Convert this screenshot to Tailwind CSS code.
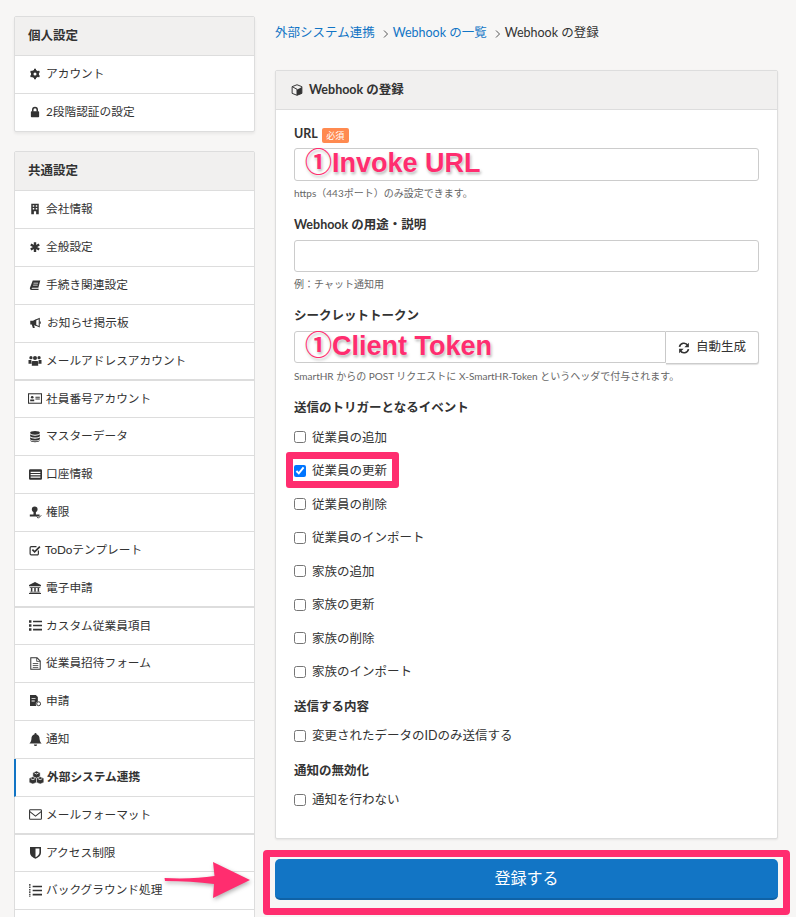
<!DOCTYPE html>
<html lang="ja">
<head>
  <meta charset="UTF-8" />
  <meta name="viewport" content="width=device-width, initial-scale=1.0" />
  <title>Webhook の登録</title>
  <script src="https://cdn.jsdelivr.net/npm/@tailwindcss/browser@4"></script>
</head>
<body class="bg-[#f7f6f5] h-[917px] overflow-hidden font-[Lato,'Noto_Sans_CJK_JP',sans-serif] text-[#333]">
  <div class="relative flex items-start gap-[20px] pl-[14px] pt-[16px]">

    <!-- sidebar -->
    <aside class="w-[241px] shrink-0 text-[11.7px]">
      <section class="bg-white border border-[#ddd] rounded-[2px] shadow-[0_2px_3px_rgba(0,0,0,0.06)] mb-[19px]">
        <h2 class="h-[39px] flex items-center pl-[13px] bg-[#f1f0ef] border-b border-[#ddd] text-[12.5px] font-bold">個人設定</h2>
        <a class="h-[38px] pb-px flex items-center gap-[5px] pl-[14px] border-b border-[#ddd]">
          <svg class="w-[12px] h-[12px] fill-none stroke-[#333]" viewBox="0 0 16 16"><circle cx="8" cy="8" r="3.7" stroke-width="3.4"/><path d="M8 1v14M2 4.5l12 7M14 4.5l-12 7" stroke-width="2.6" stroke-dasharray="3 8 3"/></svg>
          アカウント</a>
        <a class="h-[37px] pb-px flex items-center gap-[5px] pl-[14px]">
          <svg class="w-[12px] h-[12px]" viewBox="0 0 16 16"><path d="M5 7.5V5a3 3 0 0 1 6 0v2.5" fill="none" stroke="#333" stroke-width="2"/><rect x="2.5" y="7" width="11" height="8" rx="1" fill="#333"/></svg>
          2段階認証の設定</a>
      </section>

      <section class="bg-white border border-[#ddd] rounded-[2px]">
        <h2 class="h-[39px] flex items-center pl-[13px] bg-[#f1f0ef] border-b border-[#ddd] text-[12.5px] font-bold">共通設定</h2>
        <a class="h-[38px] pb-px flex items-center gap-[5px] pl-[14px] border-b border-[#ddd]">
          <svg class="w-[12px] h-[12px]" viewBox="0 0 16 16"><path fill="#333" fill-rule="evenodd" d="M3 1h10v14H3zM5 3v2h2V3zm4 0v2h2V3zM5 6.500v2h2v-2zm4 0v2h2v-2zM6.500 11v4h3v-4z"/></svg>
          会社情報</a>
        <a class="h-[38px] pb-px flex items-center gap-[5px] pl-[14px] border-b border-[#ddd]">
          <svg class="w-[12px] h-[12px]" viewBox="0 0 16 16"><path d="M8 1.500v13M2.400 4.750l11.200 6.500M13.600 4.750l-11.200 6.500" stroke="#333" stroke-width="3.200"/></svg>
          全般設定</a>
        <a class="h-[38px] pb-px flex items-center gap-[5px] pl-[14px] border-b border-[#ddd]">
          <svg class="w-[12px] h-[12px]" viewBox="0 0 16 16"><path fill="#333" fill-rule="evenodd" d="M5 2h10l-2.500 9.500H4.500c-1 0-1.300 1.500 0 1.500H13l-.5 1.500H3.500C1.500 14.500.800 13 1.300 11.500zM6 5v1h6V5zM5.500 7.500v1h6v-1z"/></svg>
          手続き関連設定</a>
        <a class="h-[38px] pb-px flex items-center gap-[5px] pl-[14px] border-b border-[#ddd]">
          <svg class="w-[13px] h-[12px]" viewBox="0 0 16 16"><path fill="#333" d="M1 5h5v5H1zM3 10h3l1 4.500H4.500z"/><path d="M6 5l7-3v11L6 10z" fill="#fff" stroke="#333" stroke-width="1.400"/><path fill="#333" d="M6 4.500l3-1.300v8.600L6 10.500z"/><path d="M13.500 6h1.500v3h-1.500" fill="#333"/></svg>
          お知らせ掲示板</a>
        <a class="h-[38px] pb-px flex items-center gap-[4px] pl-[13px] border-b-2 border-[#ddd]">
          <svg class="w-[14px] h-[13px]" viewBox="0 0 16 16"><g fill="#333"><circle cx="3" cy="4.500" r="2"/><circle cx="13" cy="4.500" r="2"/><circle cx="8" cy="5" r="2.500"/><path d="M0 7.500h3.500L4 12H0zM16 7.500h-3.500L12 12h4zM4.500 8.500h7l.5 6H4z"/></g></svg>
          メールアドレスアカウント</a>

        <a class="h-[37px] pb-px flex items-center gap-[4px] pl-[13px] border-b border-[#ddd]">
          <svg class="w-[14px] h-[11px]" viewBox="0 0 16 12"><rect x=".6" y=".6" width="14.800" height="10.800" fill="none" stroke="#333" stroke-width="1.200"/><circle cx="4.800" cy="4.600" r="1.500" fill="#333"/><path fill="#333" d="M2.500 7h4.600v2H2.500zM8.500 4h5v1h-5zM8.500 6h5v1h-5z"/></svg>
          社員番号アカウント</a>
        <a class="h-[38px] pb-px flex items-center gap-[5px] pl-[14px] border-b border-[#ddd]">
          <svg class="w-[12px] h-[13px]" viewBox="0 0 16 16"><g fill="#333"><ellipse cx="8" cy="3" rx="6.500" ry="2.500"/><path d="M1.500 5c1 2.500 12 2.500 13 0v2.500c-1 2.500-12 2.500-13 0zM1.500 9c1 2.500 12 2.500 13 0v2.500c-1 2.500-12 2.500-13 0z"/><path d="M1.500 12.500c1 2.500 12 2.500 13 0V13c0 3.500-13 3.500-13 0z"/></g></svg>
          マスターデータ</a>
        <a class="h-[38px] pb-px flex items-center gap-[4px] pl-[14px] border-b border-[#ddd]">
          <svg class="w-[13px] h-[11px]" viewBox="0 0 16 13"><path fill="#333" fill-rule="evenodd" d="M1.500 0h13A1.500 1.500 0 0 1 16 1.500v10a1.500 1.500 0 0 1-1.500 1.500h-13A1.500 1.500 0 0 1 0 11.500v-10A1.500 1.500 0 0 1 1.500 0zM2 3v1.500h12V3zM2 6v1.500h12V6zM2 9v1.500h12V9z"/></svg>
          口座情報</a>
        <a class="h-[38px] pb-px flex items-center gap-[4px] pl-[14px] border-b border-[#ddd]">
          <svg class="w-[13px] h-[13px]" viewBox="0 0 16 16"><g fill="#333"><circle cx="7" cy="4" r="3.500"/><path d="M5.500 7h3v3.500h-3zM1 10.500h12V13H1z"/></g><path d="M9.500 13l2 2 3.500-3.500" fill="none" stroke="#333" stroke-width="1.200"/></svg>
          権限</a>
        <a class="h-[38px] pb-px flex items-center gap-[4px] pl-[14px] border-b border-[#ddd]">
          <svg class="w-[12px] h-[12px]" viewBox="0 0 16 16"><path d="M12.500 8.500V13a1.500 1.500 0 0 1-1.500 1.500H3A1.500 1.500 0 0 1 1.500 13V5A1.500 1.500 0 0 1 3 3.500h7" fill="none" stroke="#333" stroke-width="1.600"/><path d="M4.500 7.500l3 3 7-7" fill="none" stroke="#333" stroke-width="2.300"/></svg>
          ToDoテンプレート</a>
        <a class="h-[38px] pb-px flex items-center gap-[5px] pl-[14px] border-b-2 border-[#ddd]">
          <svg class="w-[12px] h-[12px]" viewBox="0 0 16 16"><path fill="#333" d="M8 0l8 4v1.500H0V4zM1 6.500h14v1H1zM2.500 8h2v4.500h-2zM7 8h2v4.500H7zM11.500 8h2v4.500h-2zM1 13h14v1H1zM0 14.500h16V16H0z"/></svg>
          電子申請</a>

        <a class="h-[37px] pb-px flex items-center gap-[4px] pl-[14px] border-b border-[#ddd]">
          <svg class="w-[13px] h-[11px]" viewBox="0 0 16 13"><path fill="#333" d="M0 0h3v3H0zM5 .5h11v2H5zM0 5h3v3H0zM5 5.500h11v2H5zM0 10h3v3H0zM5 10.500h11v2H5z"/></svg>
          カスタム従業員項目</a>
        <a class="h-[38px] pb-px flex items-center gap-[5px] pl-[15px] border-b border-[#ddd]">
          <svg class="w-[11px] h-[13px]" viewBox="0 0 14 16"><path d="M1 .8h8l4 4v10.400H1z" fill="none" stroke="#333" stroke-width="1.300"/><path d="M8.500 1v4.300H13M3.500 8h7M3.500 10.500h7M3.500 13h7" fill="none" stroke="#333"/></svg>
          従業員招待フォーム</a>
        <a class="h-[38px] pb-px flex items-center gap-[5px] pl-[15px] border-b border-[#ddd]">
          <svg class="w-[11px] h-[12px]" viewBox="0 0 14 15"><path fill="#333" fill-rule="evenodd" d="M0 0h7.500L10 2.500V8a4 4 0 0 0-2 5.500V14H0zM2 4v1h5V4zM2 7v1h4V7z"/><circle cx="11" cy="11" r="2.500" fill="none" stroke="#333" stroke-width="1.200"/></svg>
          申請</a>
        <a class="h-[38px] pb-px flex items-center gap-[4px] pl-[14px] border-b border-[#ddd]">
          <svg class="w-[13px] h-[13px]" viewBox="0 0 16 16"><path fill="#333" d="M8 0a1.200 1.200 0 0 1 1.200 1.400C12 2 13 4.500 13 7c0 3 1.500 4.500 2.500 6h-15C1.500 11.500 3 10 3 7c0-2.500 1-5 3.800-5.600A1.200 1.200 0 0 1 8 0zM6 14h4a2 2 0 0 1-4 0z"/></svg>
          通知</a>
        <a class="h-[38px] pb-px flex items-center gap-[3px] pl-[13px] border-b border-[#ddd] border-l-2 border-l-[#1275c5] -ml-px font-bold">
          <svg class="w-[15px] h-[13px]" viewBox="0 0 18 16"><g fill="#333" stroke="#fff" stroke-width=".6"><path d="M9 0l4.500 2v5L9 9 4.500 7V2z"/><path d="M4.500 7L9 9v5l-4.500 2L0 14V9z"/><path d="M13.500 7L18 9v5l-4.500 2L9 14V9z"/></g><path d="M6.500 2.500L9 3.700l2.500-1.200M2 9.500l2.500 1.200L7 9.500M11 9.500l2.500 1.200L16 9.500" fill="none" stroke="#fff" stroke-width="1"/></svg>
          外部システム連携</a>
        <a class="h-[38px] pb-px flex items-center gap-[4px] pl-[14px] border-b-2 border-[#ddd]">
          <svg class="w-[13px] h-[11px]" viewBox="0 0 16 13"><rect x=".7" y=".7" width="14.600" height="11.600" rx="1" fill="none" stroke="#333" stroke-width="1.300"/><path d="M1 3l7 5.500L15 3" fill="none" stroke="#333" stroke-width="1.300"/></svg>
          メールフォーマット</a>

        <a class="h-[37px] pb-px flex items-center gap-[5px] pl-[15px] border-b border-[#ddd]">
          <svg class="w-[11px] h-[13px]" viewBox="0 0 14 16"><path fill="#333" fill-rule="evenodd" d="M0 1h14v7c0 4-3.500 6.500-7 8-3.500-1.500-7-4-7-8zm7 1.800V14c2.500-1.200 5-3.200 5-6V2.800z"/></svg>
          アクセス制限</a>
        <a class="h-[38px] pb-px flex items-center gap-[4px] pl-[14px] border-b border-[#ddd]">
          <svg class="w-[13px] h-[13px]" viewBox="0 0 16 16"><path fill="#333" d="M4.500 2h11.500v2H4.500zM4.500 7h11.500v2H4.500zM4.500 12h11.500v2H4.500z"/><path d="M1 0v16" stroke="#333" stroke-width="1.600" stroke-dasharray="2 1"/></svg>
          バックグラウンド処理</a>
        <a class="h-[38px] block"></a>
      </section>
    </aside>

    <!-- main column -->
    <main class="w-[503px] shrink-0">
      <nav class="h-[33px] pt-[2px] flex items-center gap-[5px] text-[12.5px] mb-[21px]">
        <a class="text-[#1275c5]">外部システム連携</a>
        <svg class="w-[6px] h-[8px] ml-[3px] -mr-px fill-none stroke-[#555]" viewBox="0 0 6 8"><path d="M1 .5L4.500 4 1 7.500"/></svg>
        <a class="text-[#1275c5]">Webhook の一覧</a>
        <svg class="w-[6px] h-[8px] ml-[3px] -mr-px fill-none stroke-[#555]" viewBox="0 0 6 8"><path d="M1 .5L4.500 4 1 7.500"/></svg>
        <span>Webhook の登録</span>
      </nav>

      <section class="bg-white border border-[#ddd] rounded-[2px] shadow-[0_1px_2px_rgba(0,0,0,0.08)]">
        <h1 class="h-[39px] flex items-center gap-[6px] pl-[15px] bg-[#f1f0ef] border-b border-[#ddd] text-[12.5px] font-bold">
          <svg class="w-[12px] h-[12px]" viewBox="0 0 16 16"><path d="M8 1l6.500 2.500v9L8 15l-6.500-2.500v-9z" fill="none" stroke="#333" stroke-width="1.300"/><path d="M8 7.500L14.500 4v8.500L8 15z" fill="#333"/><path d="M1.500 3.500L8 7v8" fill="none" stroke="#333" stroke-width="1.300"/></svg>
          Webhook の登録</h1>

        <form class="px-[18px] pt-[14px] pb-[20px] text-[12.5px]">
          <label class="h-[24px] flex items-start gap-[4px] font-bold">
            <span class="leading-[20px]">URL</span>
            <span class="mt-[4px] w-[27px] h-[15px] flex items-center justify-center bg-[#ff8a50] rounded-[2px] text-white text-[9px] font-normal">必須</span>
          </label>
          <div class="h-[33px] flex items-center pl-[10px] bg-white border border-[#ccc] rounded-[3px]">
            <span class="-mt-[3px] text-[27px] leading-none font-['Liberation_Sans','Noto_Sans_CJK_JP',sans-serif] font-bold text-[#ff2d6f] [text-shadow:0_0_3px_#fff,1px_2px_3px_rgba(0,0,0,0.35)]">①Invoke URL</span>
          </div>
          <p class="h-[24px] flex items-center text-[10px] text-[#666] mb-[10px]">https（443ポート）のみ設定できます。</p>

          <label class="block h-[25px] leading-[20px] font-bold">Webhook の用途・説明</label>
          <input type="text" class="block w-full h-[32px] bg-white border border-[#ccc] rounded-[3px]" />
          <p class="h-[25px] flex items-center text-[10px] text-[#666] mb-[9px]">例：チャット通知用</p>

          <label class="block h-[25px] leading-[20px] font-bold">シークレットトークン</label>
          <div class="flex h-[32px]">
            <div class="flex-1 flex items-center pl-[10px] bg-white border border-[#ccc] rounded-l-[3px]">
              <span class="-mt-[1px] text-[27px] leading-none font-['Liberation_Sans','Noto_Sans_CJK_JP',sans-serif] font-bold text-[#ff2d6f] [text-shadow:0_0_3px_#fff,1px_2px_3px_rgba(0,0,0,0.35)]">①Client Token</span>
            </div>
            <button type="button" class="w-[93px] h-[33px] flex items-center justify-center gap-[6px] bg-white border border-l-0 border-[#ccc] rounded-r-[3px] shadow-[0_1px_1px_rgba(0,0,0,0.12)]">
              <svg class="w-[12px] h-[12px] fill-none stroke-[#333]" viewBox="0 0 16 16"><path d="M2 6.500A6 6 0 0 1 13 4.500M14 9.500A6 6 0 0 1 3 11.500" stroke-width="2.200"/><path d="M14.500 1v6h-6zM1.500 15V9h6z" fill="#333" stroke="none"/></svg>
              自動生成</button>
          </div>
          <p class="h-[25px] mt-[1px] flex items-center text-[10px] text-[#666] mb-[9px]">SmartHR からの POST リクエストに X-SmartHR-Token というヘッダで付与されます。</p>

          <label class="block h-[23.500px] leading-[20px] font-bold">送信のトリガーとなるイベント</label>
          <label class="h-[33.500px] flex items-center gap-[6px]"><input type="checkbox" class="w-[12px] h-[12px] m-0 -translate-y-px" />従業員の追加</label>
          <label class="relative h-[33.500px] flex items-center gap-[6px]"><input type="checkbox" checked class="w-[12px] h-[12px] m-0 -translate-y-px" />従業員の更新
            <span class="absolute left-[-8px] top-[-3px] w-[113px] h-[36px] border-[7px] border-[#ff2d6f] rounded-[3px]"></span></label>
          <label class="h-[33.500px] flex items-center gap-[6px]"><input type="checkbox" class="w-[12px] h-[12px] m-0 -translate-y-px" />従業員の削除</label>
          <label class="h-[33.500px] flex items-center gap-[6px]"><input type="checkbox" class="w-[12px] h-[12px] m-0 -translate-y-px" />従業員のインポート</label>
          <label class="h-[33.500px] flex items-center gap-[6px]"><input type="checkbox" class="w-[12px] h-[12px] m-0 -translate-y-px" />家族の追加</label>
          <label class="h-[33.500px] flex items-center gap-[6px]"><input type="checkbox" class="w-[12px] h-[12px] m-0 -translate-y-px" />家族の更新</label>
          <label class="h-[33.500px] flex items-center gap-[6px]"><input type="checkbox" class="w-[12px] h-[12px] m-0 -translate-y-px" />家族の削除</label>
          <label class="h-[33.500px] flex items-center gap-[6px] mb-[7px]"><input type="checkbox" class="w-[12px] h-[12px] m-0 -translate-y-px" />家族のインポート</label>

          <label class="block h-[23px] leading-[20px] font-bold">送信する内容</label>
          <label class="h-[34px] flex items-center gap-[6px] mb-[7px]"><input type="checkbox" class="w-[12px] h-[12px] m-0 -translate-y-px" />変更されたデータのIDのみ送信する</label>

          <label class="block h-[23px] leading-[20px] font-bold">通知の無効化</label>
          <label class="h-[34px] flex items-center gap-[6px]"><input type="checkbox" class="w-[12px] h-[12px] m-0 -translate-y-px" />通知を行わない</label>
        </form>
      </section>

      <div class="relative mt-[20px]">
        <button type="button" class="w-full h-[41px] bg-[#1275c5] border-b-2 border-[#0f62a6] rounded-[5px] text-white text-[16px]">登録する</button>
        <span class="absolute left-[-12px] right-[-12px] top-[-9px] h-[65px] border-[7px] border-[#ff2d6f] rounded-[4px]"></span>
      </div>
    </main>

    <!-- annotation arrow -->
    <svg class="absolute left-[160px] top-[855px] w-[95px] h-[50px] drop-shadow-[1px_2px_2px_rgba(0,0,0,0.3)]" viewBox="0 0 95 50"><path d="M4.500 23c20 1 36 0 50-2L53 7l37 18-37 18 1-14c-15-2-32-3-49-3z" fill="#ff2d6f"/></svg>
  </div>
</body>
</html>
